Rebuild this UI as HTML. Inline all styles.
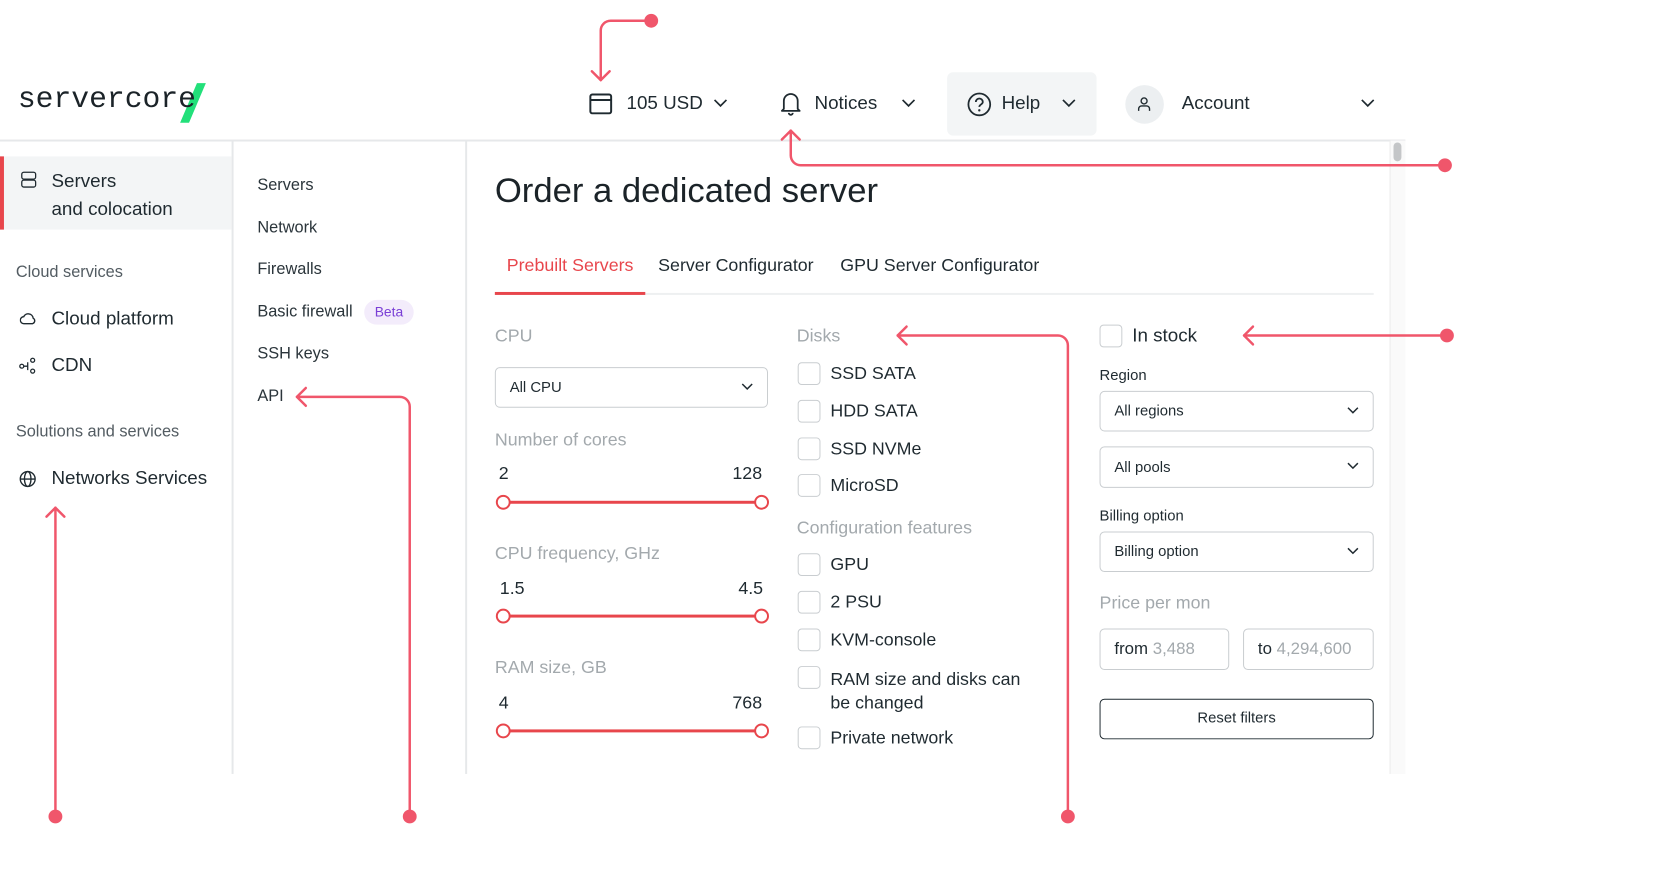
<!DOCTYPE html>
<html><head><meta charset="utf-8"><style>
*{margin:0;padding:0;box-sizing:border-box}
body{width:1680px;height:881px;background:#fff;font-family:"Liberation Sans",sans-serif;color:#1f2a30;position:relative;overflow:hidden}
#w{position:absolute;left:0;top:0;width:1700px;height:890px;transform:scale(0.9897);transform-origin:0 0}
.a{position:absolute;white-space:nowrap}
.g{color:#a3a9ad}
.cb{position:absolute;width:23px;height:23px;border:1.5px solid #c9cdd0;border-radius:4px;background:#fff}
.sel{position:absolute;border:1.5px solid #c9cdd0;border-radius:5px;font-size:15px;padding-left:14px;display:flex;align-items:center}
.sel svg{position:absolute;right:14px;top:50%;margin-top:-5px}
.knob{position:absolute;width:15px;height:15px;border:2.5px solid #e8464c;border-radius:50%;background:#fff}
.bar{position:absolute;height:3px;background:#e8464c}
</style></head><body><div id="w">
<!-- header -->
<svg class="a" style="left:0;top:0" width="220" height="130"><polygon points="182,124 191,124 208,84 199,84" fill="#22e07a"/></svg>
<div class="a" style="left:18px;top:84px;font-family:'Liberation Mono',monospace;font-size:30px;color:#1b2328">servercore</div>
<div class="a" style="left:0;top:141px;width:1420px;height:1.5px;background:#e6e8ea"></div>

<svg class="a" style="left:595px;top:94px" width="24" height="22" viewBox="0 0 24 22"><rect x="1.5" y="1.5" width="21" height="19" rx="2" fill="none" stroke="#1f2a30" stroke-width="2"/><line x1="1.5" y1="7" x2="22.5" y2="7" stroke="#1f2a30" stroke-width="2"/></svg>
<div class="a" style="left:633px;top:94px;font-size:19px">105 USD</div>
<svg class="a" style="left:721px;top:100px" width="14" height="9"><path d="M1 1l6 6 6-6" fill="none" stroke="#1f2a30" stroke-width="1.7"/></svg>

<svg class="a" style="left:788px;top:92px" width="22" height="26" viewBox="0 0 22 26"><path d="M4 18V10a7 7 0 0114 0v8l2 2H2z" fill="none" stroke="#1f2a30" stroke-width="1.8" stroke-linejoin="round"/><path d="M9 22a2 2 0 004 0" fill="none" stroke="#1f2a30" stroke-width="1.8"/></svg>
<div class="a" style="left:823px;top:94px;font-size:19px">Notices</div>
<svg class="a" style="left:911px;top:100px" width="14" height="9"><path d="M1 1l6 6 6-6" fill="none" stroke="#1f2a30" stroke-width="1.7"/></svg>

<div class="a" style="left:957px;top:73px;width:151px;height:64px;background:#f3f5f6;border-radius:6px"></div>
<svg class="a" style="left:977px;top:93px" width="25" height="25"><circle cx="12.5" cy="12.5" r="11" fill="none" stroke="#1f2a30" stroke-width="1.8"/><path d="M9 10a3.5 3.5 0 117 0c0 2.5-3.5 2.5-3.5 5" fill="none" stroke="#1f2a30" stroke-width="1.8"/><circle cx="12.5" cy="18.5" r="1.2" fill="#1f2a30"/></svg>
<div class="a" style="left:1012px;top:94px;font-size:19px">Help</div>
<svg class="a" style="left:1073px;top:100px" width="14" height="9"><path d="M1 1l6 6 6-6" fill="none" stroke="#1f2a30" stroke-width="1.7"/></svg>

<div class="a" style="left:1137px;top:86px;width:39px;height:39px;border-radius:50%;background:#eceff1"></div>
<svg class="a" style="left:1149px;top:97px" width="14" height="16"><circle cx="7" cy="5" r="3" fill="none" stroke="#1f2a30" stroke-width="1.4"/><path d="M1.5 15v-2a3 3 0 013-3h5a3 3 0 013 3v2" fill="none" stroke="#1f2a30" stroke-width="1.4"/></svg>
<div class="a" style="left:1194px;top:94px;font-size:19px">Account</div>
<svg class="a" style="left:1375px;top:100px" width="14" height="9"><path d="M1 1l6 6 6-6" fill="none" stroke="#1f2a30" stroke-width="1.7"/></svg>

<!-- sidebar -->
<div class="a" style="left:234px;top:142px;width:1.5px;height:640px;background:#e6e8ea"></div>
<div class="a" style="left:470px;top:142px;width:1.5px;height:640px;background:#e6e8ea"></div>
<div class="a" style="left:0;top:158px;width:234px;height:74px;background:#f3f5f6"></div>
<div class="a" style="left:0;top:158px;width:4px;height:74px;background:#e8464c"></div>
<svg class="a" style="left:21px;top:173px" width="16" height="18"><rect x="1" y="1" width="14" height="7" rx="2" fill="none" stroke="#1f2a30" stroke-width="1.3"/><rect x="1" y="9" width="14" height="7" rx="2" fill="none" stroke="#1f2a30" stroke-width="1.3"/></svg>
<div class="a" style="left:52px;top:170px;font-size:19px;line-height:28px">Servers<br>and colocation</div>
<div class="a" style="left:16px;top:266px;font-size:16.5px;color:#535c62">Cloud services</div>
<svg class="a" style="left:20px;top:314px" width="17" height="15"><path d="M4 13a3.5 3.5 0 010-7 5 5 0 019.5 1.5A3 3 0 0113 13z" fill="none" stroke="#1f2a30" stroke-width="1.4"/></svg>
<div class="a" style="left:52px;top:312px;font-size:19px">Cloud platform</div>
<svg class="a" style="left:19px;top:361px" width="18" height="17"><circle cx="3" cy="9" r="2" fill="none" stroke="#1f2a30" stroke-width="1.3"/><circle cx="14" cy="3" r="2" fill="none" stroke="#1f2a30" stroke-width="1.3"/><circle cx="14" cy="14" r="2" fill="none" stroke="#1f2a30" stroke-width="1.3"/><path d="M5 9h4M9 5v8" fill="none" stroke="#1f2a30" stroke-width="1.3"/></svg>
<div class="a" style="left:52px;top:359px;font-size:19px">CDN</div>
<div class="a" style="left:16px;top:427px;font-size:16.5px;color:#535c62">Solutions and services</div>
<svg class="a" style="left:19px;top:475px" width="18" height="18"><circle cx="9" cy="9" r="7.5" fill="none" stroke="#1f2a30" stroke-width="1.4"/><ellipse cx="9" cy="9" rx="3.3" ry="7.5" fill="none" stroke="#1f2a30" stroke-width="1.4"/><path d="M1.5 9h15" stroke="#1f2a30" stroke-width="1.4"/></svg>
<div class="a" style="left:52px;top:473px;font-size:19px">Networks Services</div>

<div class="a" style="left:260px;top:178px;font-size:16.5px;color:#2b353b">Servers</div>
<div class="a" style="left:260px;top:221px;font-size:16.5px;color:#2b353b">Network</div>
<div class="a" style="left:260px;top:263px;font-size:16.5px;color:#2b353b">Firewalls</div>
<div class="a" style="left:260px;top:306px;font-size:16.5px;color:#2b353b">Basic firewall</div>
<div class="a" style="left:368px;top:303px;width:50px;height:25px;border-radius:13px;background:#f3ecfb;color:#7a3fd6;font-size:14px;text-align:center;line-height:25px">Beta</div>
<div class="a" style="left:260px;top:348px;font-size:16.5px;color:#2b353b">SSH keys</div>
<div class="a" style="left:260px;top:391px;font-size:16.5px;color:#2b353b">API</div>

<!-- scrollbar -->
<div class="a" style="left:1404px;top:142px;width:16px;height:640px;background:#fafafa;border-left:1px solid #ececec"></div>
<div class="a" style="left:1408px;top:144px;width:8px;height:19px;background:#c4c6c8;border-radius:4px"></div>

<!-- main -->
<div class="a" style="left:500px;top:173px;font-size:35px;color:#1b2328">Order a dedicated server</div>
<div class="a" style="left:512px;top:258px;font-size:18px;color:#e8464c">Prebuilt Servers</div>
<div class="a" style="left:665px;top:258px;font-size:18px">Server Configurator</div>
<div class="a" style="left:849px;top:258px;font-size:18px">GPU Server Configurator</div>
<div class="a" style="left:500px;top:296px;width:888px;height:2px;background:#eef0f1"></div>
<div class="a" style="left:500px;top:295px;width:152px;height:3px;background:#e8464c"></div>

<div class="a g" style="left:500px;top:329px;font-size:18px">CPU</div>
<div class="sel" style="left:500px;top:371px;width:276px;height:41px">All CPU<svg width="12" height="8"><path d="M1 1l5 5 5-5" fill="none" stroke="#1f2a30" stroke-width="1.5"/></svg></div>

<div class="a g" style="left:500px;top:434px;font-size:18px">Number of cores</div>
<div class="a" style="left:504px;top:468px;font-size:18px">2</div>
<div class="a" style="left:740px;top:468px;font-size:18px">128</div>
<div class="bar" style="left:508px;top:506px;width:261px"></div>
<div class="knob" style="left:501px;top:500px"></div><div class="knob" style="left:762px;top:500px"></div>

<div class="a g" style="left:500px;top:549px;font-size:18px">CPU frequency, GHz</div>
<div class="a" style="left:505px;top:584px;font-size:18px">1.5</div>
<div class="a" style="left:746px;top:584px;font-size:18px">4.5</div>
<div class="bar" style="left:508px;top:621px;width:261px"></div>
<div class="knob" style="left:501px;top:615px"></div><div class="knob" style="left:762px;top:615px"></div>

<div class="a g" style="left:500px;top:664px;font-size:18px">RAM size, GB</div>
<div class="a" style="left:504px;top:700px;font-size:18px">4</div>
<div class="a" style="left:740px;top:700px;font-size:18px">768</div>
<div class="bar" style="left:508px;top:737px;width:261px"></div>
<div class="knob" style="left:501px;top:731px"></div><div class="knob" style="left:762px;top:731px"></div>

<div class="a g" style="left:805px;top:329px;font-size:18px">Disks</div>
<div class="cb" style="left:806px;top:366px"></div><div class="a" style="left:839px;top:367px;font-size:18px">SSD SATA</div>
<div class="cb" style="left:806px;top:404px"></div><div class="a" style="left:839px;top:405px;font-size:18px">HDD SATA</div>
<div class="cb" style="left:806px;top:442px"></div><div class="a" style="left:839px;top:443px;font-size:18px">SSD NVMe</div>
<div class="cb" style="left:806px;top:479px"></div><div class="a" style="left:839px;top:480px;font-size:18px">MicroSD</div>
<div class="a g" style="left:805px;top:523px;font-size:18px">Configuration features</div>
<div class="cb" style="left:806px;top:559px"></div><div class="a" style="left:839px;top:560px;font-size:18px">GPU</div>
<div class="cb" style="left:806px;top:597px"></div><div class="a" style="left:839px;top:598px;font-size:18px">2 PSU</div>
<div class="cb" style="left:806px;top:635px"></div><div class="a" style="left:839px;top:636px;font-size:18px">KVM-console</div>
<div class="cb" style="left:806px;top:673px"></div><div class="a" style="left:839px;top:674px;font-size:18px;line-height:24px">RAM size and disks can<br>be changed</div>
<div class="cb" style="left:806px;top:734px"></div><div class="a" style="left:839px;top:735px;font-size:18px">Private network</div>

<div class="cb" style="left:1111px;top:328px"></div><div class="a" style="left:1144px;top:329px;font-size:19px">In stock</div>
<div class="a" style="left:1111px;top:371px;font-size:15px">Region</div>
<div class="sel" style="left:1111px;top:395px;width:277px;height:41px">All regions<svg width="12" height="8"><path d="M1 1l5 5 5-5" fill="none" stroke="#1f2a30" stroke-width="1.5"/></svg></div>
<div class="sel" style="left:1111px;top:451px;width:277px;height:42px">All pools<svg width="12" height="8"><path d="M1 1l5 5 5-5" fill="none" stroke="#1f2a30" stroke-width="1.5"/></svg></div>
<div class="a" style="left:1111px;top:513px;font-size:15px">Billing option</div>
<div class="sel" style="left:1111px;top:537px;width:277px;height:41px">Billing option<svg width="12" height="8"><path d="M1 1l5 5 5-5" fill="none" stroke="#1f2a30" stroke-width="1.5"/></svg></div>
<div class="a g" style="left:1111px;top:599px;font-size:18px">Price per mon</div>
<div class="sel" style="left:1111px;top:635px;width:131px;height:42px;font-size:17px">from&nbsp;<span class="g">3,488</span></div>
<div class="sel" style="left:1256px;top:635px;width:132px;height:42px;font-size:17px;overflow:hidden">to&nbsp;<span class="g">4,294,600</span></div>
<div class="a" style="left:1111px;top:706px;width:277px;height:41px;border:1.5px solid #1f2a30;border-radius:5px;text-align:center;line-height:38px;font-size:15px">Reset filters</div>

<!-- annotations -->
<svg class="a" style="left:0;top:0" width="1700" height="890">
<g fill="none" stroke="#f0566b" stroke-width="2.5" stroke-linecap="round" stroke-linejoin="round">
<path d="M658 21H617a10 10 0 00-10 10V81"/><path d="M598 72l9 9 9-9"/>
<path d="M1460 167H809a10 10 0 01-10-10V132"/><path d="M790 141l9-9 9 9"/>
<path d="M1462 339H1257"/><path d="M1266 330l-9 9 9 9"/>
<path d="M907 339H1069a10 10 0 0110 10V825"/><path d="M916 330l-9 9 9 9"/>
<path d="M300 401H404a10 10 0 0110 10V825"/><path d="M309 392l-9 9 9 9"/>
<path d="M56 513V825"/><path d="M47 522l9-9 9 9"/>
</g>
<g fill="#f0566b"><circle cx="658" cy="21" r="7"/><circle cx="1460" cy="167" r="7"/><circle cx="1462" cy="339" r="7"/><circle cx="1079" cy="825" r="7"/><circle cx="414" cy="825" r="7"/><circle cx="56" cy="825" r="7"/></g>
</svg>
</div></body></html>
